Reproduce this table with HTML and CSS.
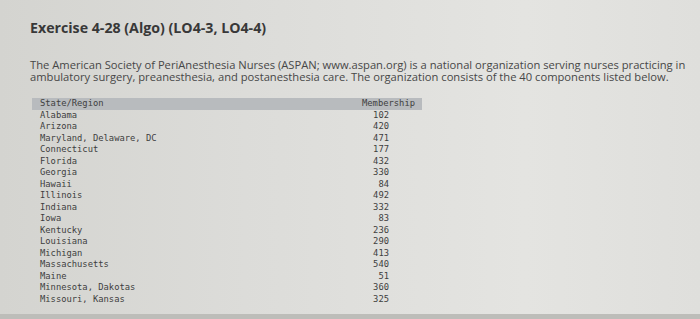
FILE: index.html
```html
<!DOCTYPE html>
<html>
<head>
<meta charset="utf-8">
<link rel="stylesheet" href="styles.css">
</head>
<body>
<div class="page">
  <h1 class="title">Exercise 4-28 (Algo) (LO4-3, LO4-4)</h1>
  <p class="intro">The American Society of PeriAnesthesia Nurses (ASPAN; www.aspan.org) is a national organization serving nurses practicing in ambulatory surgery, preanesthesia, and postanesthesia care. The organization consists of the 40 components listed below.</p>
  <table class="data">
    <thead>
      <tr><th class="c-name">State/Region</th><th class="c-num">Membership</th></tr>
    </thead>
    <tbody>
      <tr><td class="c-name">Alabama</td><td class="c-num">102</td></tr>
      <tr><td class="c-name">Arizona</td><td class="c-num">420</td></tr>
      <tr><td class="c-name">Maryland, Delaware, DC</td><td class="c-num">471</td></tr>
      <tr><td class="c-name">Connecticut</td><td class="c-num">177</td></tr>
      <tr><td class="c-name">Florida</td><td class="c-num">432</td></tr>
      <tr><td class="c-name">Georgia</td><td class="c-num">330</td></tr>
      <tr><td class="c-name">Hawaii</td><td class="c-num">84</td></tr>
      <tr><td class="c-name">Illinois</td><td class="c-num">492</td></tr>
      <tr><td class="c-name">Indiana</td><td class="c-num">332</td></tr>
      <tr><td class="c-name">Iowa</td><td class="c-num">83</td></tr>
      <tr><td class="c-name">Kentucky</td><td class="c-num">236</td></tr>
      <tr><td class="c-name">Louisiana</td><td class="c-num">290</td></tr>
      <tr><td class="c-name">Michigan</td><td class="c-num">413</td></tr>
      <tr><td class="c-name">Massachusetts</td><td class="c-num">540</td></tr>
      <tr><td class="c-name">Maine</td><td class="c-num">51</td></tr>
      <tr><td class="c-name">Minnesota, Dakotas</td><td class="c-num">360</td></tr>
      <tr><td class="c-name">Missouri, Kansas</td><td class="c-num">325</td></tr>
    </tbody>
  </table>
</div>
<div class="edge"></div>
</body>
</html>
```
FILE: styles.css
```css
html, body {
  margin: 0;
  padding: 0;
  height: 319px;
  overflow: hidden;
}
body {
  background: linear-gradient(90deg, #d4d4d0 0%, #dcdcd9 35%, #e4e4e1 75%, #dfdfdc 100%);
  display: flex;
  flex-direction: column;
}
.page {
  flex: 1;
  padding: 19px 0 0 30px;
  overflow: hidden;
}
.title {
  margin: 0;
  font-family: "Open Sans", sans-serif;
  font-weight: 700;
  font-size: 14.2px;
  line-height: 18px;
  color: #383838;
}
.intro {
  margin: 22px 0 0 0;
  width: 670px;
  font-family: "Open Sans", sans-serif;
  font-size: 11.2px;
  line-height: 11.6px;
  color: #474747;
}
.data {
  margin: 16px 0 0 2px;
  border-collapse: collapse;
  table-layout: fixed;
  width: 390px;
  font-family: "DejaVu Sans Mono", "Liberation Mono", monospace;
  font-size: 8.8px;
  line-height: 11.5px;
  color: #3e3e3e;
}
.data th,
.data td {
  box-sizing: border-box;
  padding: 0;
}
.data th {
  font-weight: 400;
  background: #b8bbbe;
  color: #404040;
}
.c-name {
  width: 320px;
  padding-left: 8px !important;
  text-align: left;
}
.c-num {
  width: 70px;
  text-align: right;
}
.data th.c-num {
  text-align: center;
  padding-left: 3px !important;
}
.data td.c-num {
  padding-right: 33px !important;
}
.edge {
  height: 5px;
  background: #bdbdb9;
}
```
